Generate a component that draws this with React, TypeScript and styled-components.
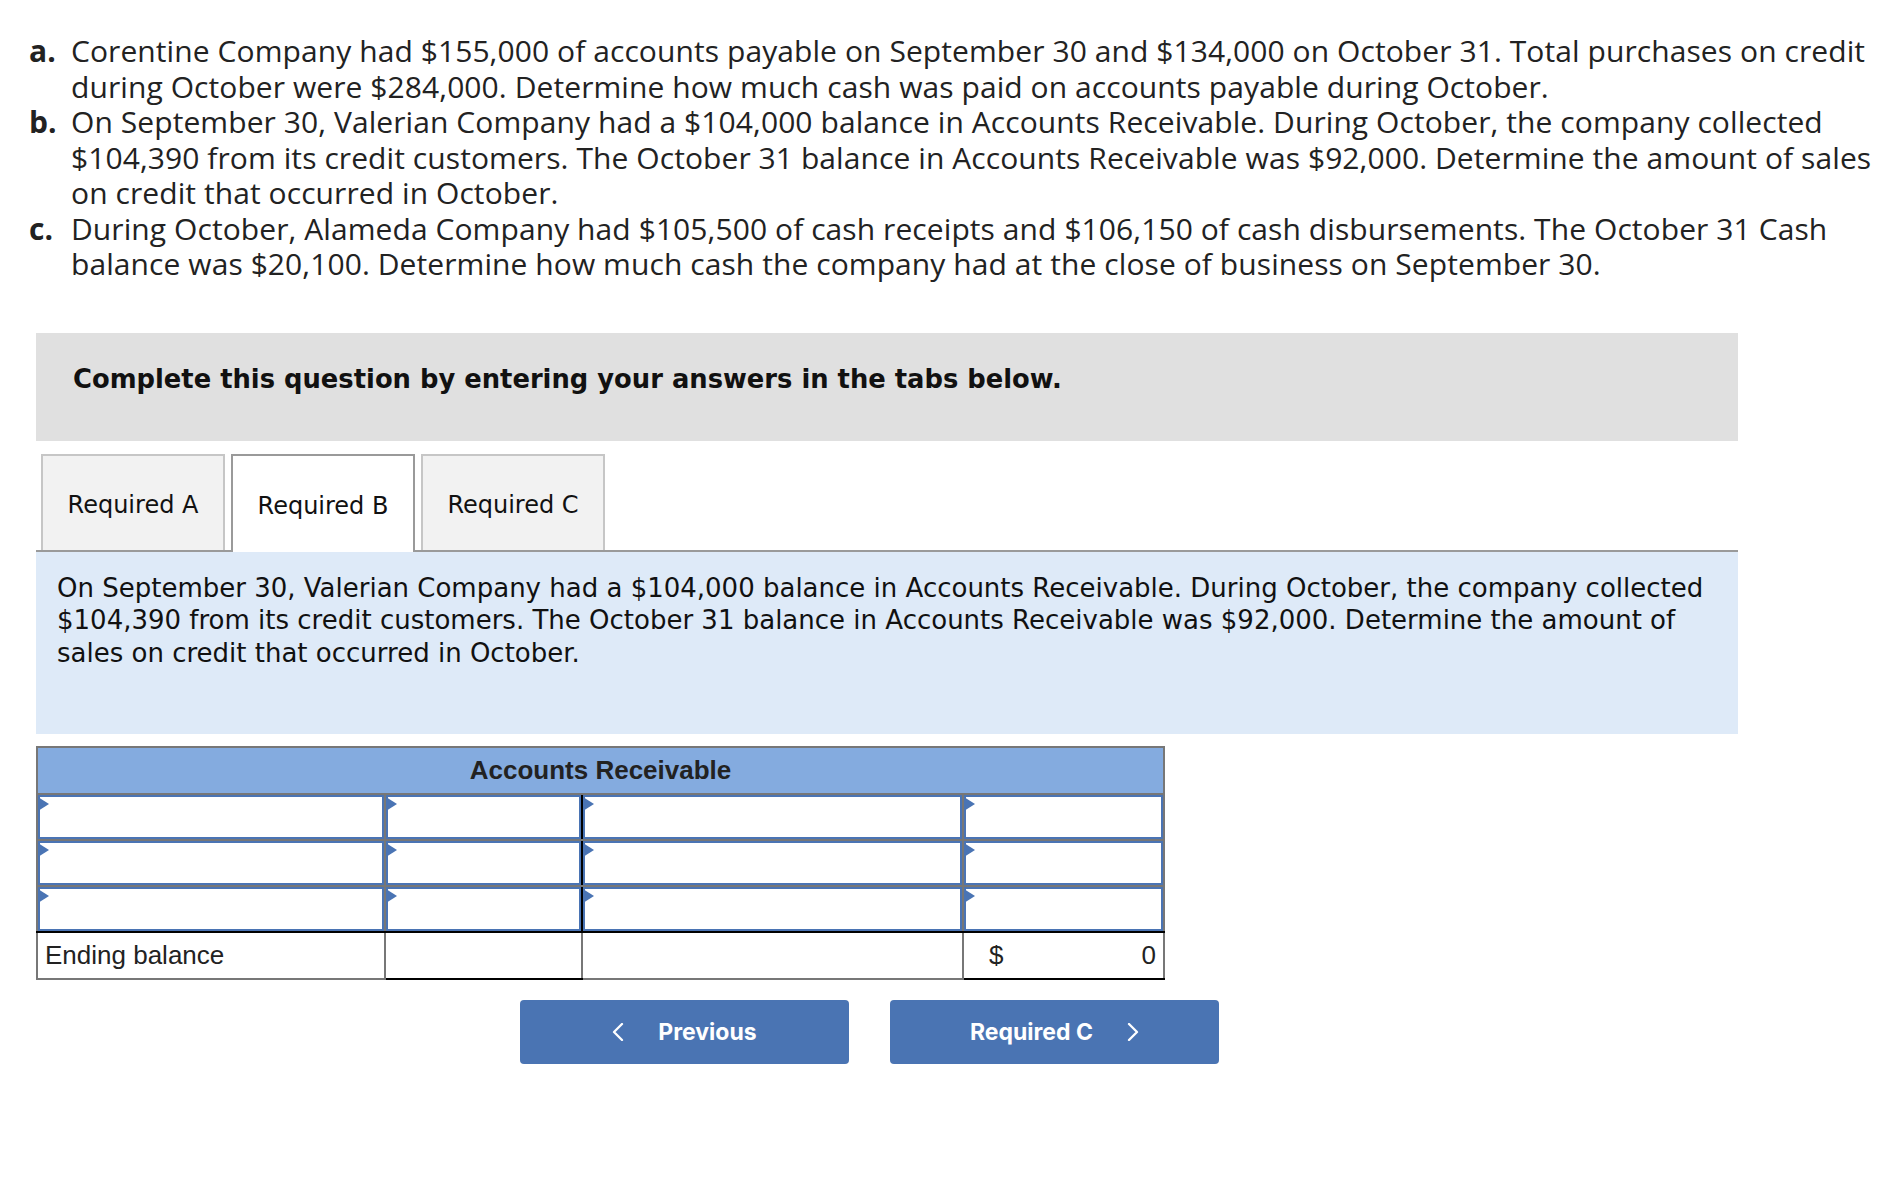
import React from "react";
import styled, { createGlobalStyle } from "styled-components";

const GlobalStyle = createGlobalStyle`
  html, body { margin: 0; padding: 0; background: #ffffff; }
  body { font-family: "Open Sans", "Liberation Sans", sans-serif; color: #222; }
  *, *::before, *::after { box-sizing: border-box; }
`;

const Page = styled.main`
  width: 1896px;
  padding: 33px 8px 60px 0;
`;

const QuestionList = styled.ol`
  list-style: none;
  margin: 0;
  padding: 0 0 0 29px;
`;

const QuestionItem = styled.li`
  display: grid;
  grid-template-columns: 42px 1fr;
  font-family: "Open Sans", "Liberation Sans", sans-serif;
  font-size: 30px;
  letter-spacing: 0.08px;
  line-height: 35.5px;
  color: #222;
`;

const QuestionLabel = styled.span`
  font-weight: 700;
`;

const Workspace = styled.section`
  width: 1702px;
  margin: 51px 0 0 36px;
`;

const Instruction = styled.div`
  background: #e0e0e0;
  padding: 31px 37px 47px;
  font-family: "DejaVu Sans", Verdana, sans-serif;
  font-weight: 700;
  font-size: 25.8px;
  line-height: 30px;
  color: #111;
`;

const TabBar = styled.div`
  display: flex;
  align-items: flex-end;
  gap: 6px;
  margin-top: 13px;
  padding-left: 5px;
  border-bottom: 2px solid #9a9a9a;
`;

const Tab = styled.button<{ $active?: boolean }>`
  width: 184px;
  height: ${(p) => (p.$active ? "98px" : "96px")};
  margin: 0 0 ${(p) => (p.$active ? "-2px" : "0")};
  padding: 4px 0 0;
  border: 2px solid ${(p) => (p.$active ? "#9a9a9a" : "#c6c6c6")};
  border-bottom: none;
  background: ${(p) => (p.$active ? "#ffffff" : "#f2f2f2")};
  font-family: "DejaVu Sans", Verdana, sans-serif;
  font-size: 24px;
  color: #111;
  cursor: pointer;
`;

const InfoPanel = styled.div`
  height: 182px;
  padding: 20px 8px 0 21px;
  background: #deeaf8;
  font-family: "DejaVu Sans", Verdana, sans-serif;
  font-size: 26px;
  line-height: 32.5px;
  color: #111;
`;

const Ledger = styled.table`
  width: 1127px;
  margin-top: 12px;
  border-collapse: collapse;
  table-layout: fixed;
  border: 2px solid #777;
  font-family: "Liberation Sans", Arial, sans-serif;
  font-size: 26px;
  color: #222;
`;

const HeadCell = styled.th`
  height: 47px;
  padding: 0;
  background: #84abdf;
  border: 2px solid #777;
  font-weight: 700;
  font-size: 26px;
  text-align: center;
  color: #222;
`;

const EntryCell = styled.td<{ $rule?: boolean; $last?: boolean }>`
  height: 44px;
  padding: 0;
  border: 2px solid #777;
  border-right-color: ${(p) => (p.$rule ? "#000" : "#777")};
  border-bottom-color: ${(p) => (p.$last ? "#000" : "#777")};
`;

const Field = styled.div`
  position: relative;
  height: 44px;
`;

const FieldInput = styled.input`
  display: block;
  width: 100%;
  height: 44px;
  margin: 0;
  padding: 0 8px;
  border: 2px solid #4a74b4;
  background: #fff;
  font-family: "Liberation Sans", Arial, sans-serif;
  font-size: 24px;
  outline: none;
`;

const Marker = styled.span`
  position: absolute;
  top: 2px;
  left: 0;
  width: 0;
  height: 0;
  border-top: 7px solid transparent;
  border-bottom: 7px solid transparent;
  border-left: 11px solid #4a74b4;
  pointer-events: none;
`;

const TotalCell = styled.td<{ $heavy?: boolean }>`
  height: 47px;
  padding: 0 0 0 7px;
  border: 2px solid #777;
  border-bottom-color: ${(p) => (p.$heavy ? "#000" : "#777")};
  vertical-align: middle;
`;

const Amount = styled.div`
  display: flex;
  justify-content: space-between;
  padding: 0 7px 0 18px;
`;

const NavRow = styled.div`
  display: flex;
  gap: 41px;
  margin-top: 20px;
  padding-left: 484px;
`;

const NavButton = styled.button`
  width: 329px;
  height: 64px;
  border: 0;
  border-radius: 4px;
  background: #4a74b3;
  color: #fff;
  display: flex;
  align-items: center;
  justify-content: center;
  gap: 34px;
  font-family: Inter, "Liberation Sans", sans-serif;
  font-weight: 700;
  font-size: 23px;
  cursor: pointer;
`;

const Chevron = ({ dir }: { dir: "left" | "right" }) => (
  <svg width="12" height="18" viewBox="0 0 12 18" aria-hidden="true">
    <polyline
      points={dir === "left" ? "10,1 2,9 10,17" : "2,1 10,9 2,17"}
      fill="none"
      stroke="#fff"
      strokeWidth="2.3"
      strokeLinecap="round"
      strokeLinejoin="round"
    />
  </svg>
);

const questions = [
  {
    label: "a.",
    text: "Corentine Company had $155,000 of accounts payable on September 30 and $134,000 on October 31. Total purchases on credit during October were $284,000. Determine how much cash was paid on accounts payable during October.",
  },
  {
    label: "b.",
    text: "On September 30, Valerian Company had a $104,000 balance in Accounts Receivable. During October, the company collected $104,390 from its credit customers. The October 31 balance in Accounts Receivable was $92,000. Determine the amount of sales on credit that occurred in October.",
  },
  {
    label: "c.",
    text: "During October, Alameda Company had $105,500 of cash receipts and $106,150 of cash disbursements. The October 31 Cash balance was $20,100. Determine how much cash the company had at the close of business on September 30.",
  },
];

const EntryRow = ({ last }: { last?: boolean }) => (
  <tr>
    {[0, 1, 2, 3].map((i) => (
      <EntryCell key={i} $rule={i === 1} $last={last}>
        <Field>
          <FieldInput type="text" aria-label="entry" />
          <Marker />
        </Field>
      </EntryCell>
    ))}
  </tr>
);

export default function App() {
  return (
    <>
      <GlobalStyle />
      <Page>
        <QuestionList>
          {questions.map((q) => (
            <QuestionItem key={q.label}>
              <QuestionLabel>{q.label}</QuestionLabel>
              <span>{q.text}</span>
            </QuestionItem>
          ))}
        </QuestionList>

        <Workspace>
          <Instruction>Complete this question by entering your answers in the tabs below.</Instruction>

          <TabBar>
            <Tab>Required A</Tab>
            <Tab $active>Required B</Tab>
            <Tab>Required C</Tab>
          </TabBar>

          <InfoPanel>
            On September 30, Valerian Company had a $104,000 balance in Accounts Receivable. During October, the company collected $104,390 from its credit customers. The October 31 balance in Accounts Receivable was $92,000. Determine the amount of sales on credit that occurred in October.
          </InfoPanel>

          <Ledger>
            <colgroup>
              <col style={{ width: 348 }} />
              <col style={{ width: 197 }} />
              <col style={{ width: 381 }} />
              <col style={{ width: 201 }} />
            </colgroup>
            <thead>
              <tr>
                <HeadCell colSpan={4}>Accounts Receivable</HeadCell>
              </tr>
            </thead>
            <tbody>
              <EntryRow />
              <EntryRow />
              <EntryRow last />
              <tr>
                <TotalCell>Ending balance</TotalCell>
                <TotalCell $heavy />
                <TotalCell />
                <TotalCell $heavy>
                  <Amount>
                    <span>$</span>
                    <span>0</span>
                  </Amount>
                </TotalCell>
              </tr>
            </tbody>
          </Ledger>

          <NavRow>
            <NavButton>
              <Chevron dir="left" />
              <span>Previous</span>
            </NavButton>
            <NavButton>
              <span>Required C</span>
              <Chevron dir="right" />
            </NavButton>
          </NavRow>
        </Workspace>
      </Page>
    </>
  );
}
